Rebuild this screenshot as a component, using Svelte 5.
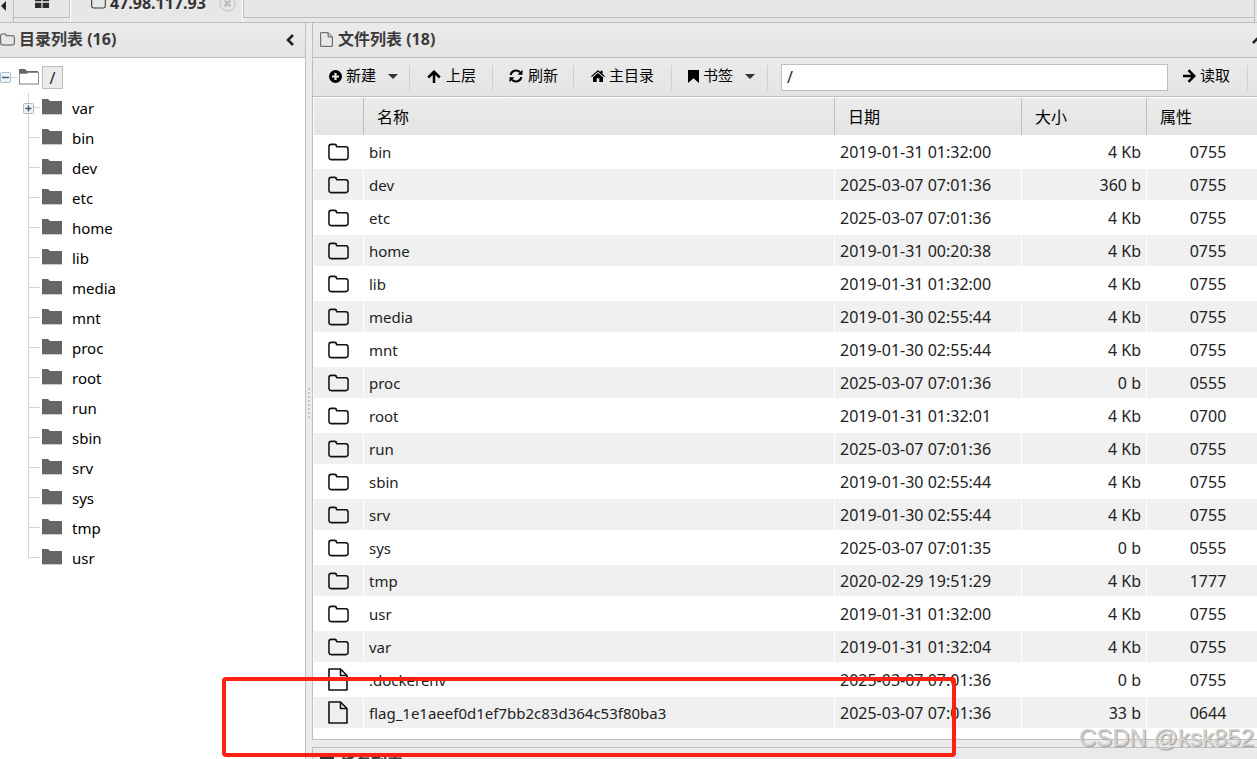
<script>
  const dirs = ['var', 'bin', 'dev', 'etc', 'home', 'lib', 'media', 'mnt', 'proc', 'root', 'run', 'sbin', 'srv', 'sys', 'tmp', 'usr'];
  const files = [
    ['bin', '2019-01-31 01:32:00', '4 Kb', '0755'],
    ['dev', '2025-03-07 07:01:36', '360 b', '0755'],
    ['etc', '2025-03-07 07:01:36', '4 Kb', '0755'],
    ['home', '2019-01-31 00:20:38', '4 Kb', '0755'],
    ['lib', '2019-01-31 01:32:00', '4 Kb', '0755'],
    ['media', '2019-01-30 02:55:44', '4 Kb', '0755'],
    ['mnt', '2019-01-30 02:55:44', '4 Kb', '0755'],
    ['proc', '2025-03-07 07:01:36', '0 b', '0555'],
    ['root', '2019-01-31 01:32:01', '4 Kb', '0700'],
    ['run', '2025-03-07 07:01:36', '4 Kb', '0755'],
    ['sbin', '2019-01-30 02:55:44', '4 Kb', '0755'],
    ['srv', '2019-01-30 02:55:44', '4 Kb', '0755'],
    ['sys', '2025-03-07 07:01:35', '0 b', '0555'],
    ['tmp', '2020-02-29 19:51:29', '4 Kb', '1777'],
    ['usr', '2019-01-31 01:32:00', '4 Kb', '0755'],
    ['var', '2019-01-31 01:32:04', '4 Kb', '0755'],
    ['.dockerenv', '2025-03-07 07:01:36', '0 b', '0755'],
    ['flag_1e1aeef0d1ef7bb2c83d364c53f80ba3', '2025-03-07 07:01:36', '33 b', '0644']
  ].map(([name, date, size, mode], i) => ({ name, date, size, mode, isFile: i > 15 }));
  let path = $state('/');
</script>

{#snippet folderLine(w, h, sw)}
  <svg width={w} height={h} viewBox="0 0 22 18" fill="none" stroke="currentColor" stroke-width={sw} stroke-linejoin="round">
    <path d="M1 3.4Q1 1 3.400 1H7Q9 1 9 3.600H18.600Q21 3.600 21 6V14.600Q21 17 18.600 17H3.400Q1 17 1 14.600Z" />
  </svg>
{/snippet}
{#snippet fileLine(w, h, sw)}
  <svg width={w} height={h} viewBox="0 0 20 23" fill="none" stroke="currentColor" stroke-width={sw} stroke-linejoin="round">
    <path d="M1 1H12.500L19 7.500V22H1ZM12.500 1V7.500H19" />
  </svg>
{/snippet}
{#snippet caret()}
  <svg class="caret" width="10" height="5" viewBox="0 0 10 5"><path d="M0 0H10L5 5Z" fill="#333" /></svg>
{/snippet}

<div class="app">
  <div class="tabs">
    <button class="scroll" aria-label="◂"><svg width="5" height="10" viewBox="0 0 5 10"><path d="M5 0V10L0 5Z" fill="#222" /></svg></button>
    <button class="tab home" aria-label="⊞">
      <svg width="14" height="12" viewBox="0 0 14 12" fill="#2c2c2c"><path d="M0 0H6.400V5.300H0ZM7.600 0H14V5.300H7.600ZM0 6.700H6.400V12H0ZM7.600 6.700H14V12H7.600Z" /></svg>
    </button>
    <button class="tab active">
      {@render folderLine(15, 13, 1.5)}
      <span>47.98.117.93</span>
      <svg class="close" width="17" height="17" viewBox="0 0 17 17" fill="none" stroke="#c0c0c0"><circle cx="8.500" cy="8.500" r="7.500" /><path d="M5.500 5.500L11.500 11.500M11.500 5.500L5.500 11.500" stroke-width="2.500" /></svg>
    </button>
    <div class="filler"></div>
    <div class="edge"></div>
  </div>

  <div class="main">
    <aside class="side">
      <header class="bar">
        {@render folderLine(15, 13, 1.5)}
        <h2>目录列表 (16)</h2>
        <button class="fold" aria-label="‹"><svg width="8" height="12" viewBox="0 0 8 12" fill="none" stroke="#222" stroke-width="2.6"><path d="M7 1L2 6L7 11" /></svg></button>
      </header>
      <div class="tree">
        <div class="root">
          <svg class="pm" width="11" height="11" viewBox="0 0 11 11"><rect x="0.500" y="0.500" width="10" height="10" rx="1" fill="#edf3f7" stroke="#a9bcc9" /><path d="M2 5.500H9" stroke="#3f5b6e" stroke-width="1.400" /></svg>
          <i class="dash"></i>
          <svg class="open" width="20" height="16" viewBox="0 0 20 16"><path d="M0 0H6L8 2H19V5H0Z" fill="#666" /><path d="M.5 15V4.500H8L9 3.500H19.500V15Z" fill="#fff" stroke="#8b8b8b" /><path d="M0 15.500H20" stroke="#bbb" /></svg>
          <button class="slash">/</button>
        </div>
        <ul>
          {#each dirs as d, i}
            <li>
              <span class="join" class:last={i === dirs.length - 1}>
                {#if i === 0}
                  <svg width="11" height="11" viewBox="0 0 11 11"><rect x="0.500" y="0.500" width="10" height="10" rx="1" fill="#edf3f7" stroke="#a9bcc9" /><path d="M2.500 5.500H8.500M5.500 2.500V8.500" stroke="#3f5b6e" stroke-width="1.400" /></svg>
                {/if}
              </span>
              <svg class="dir" width="20" height="16" viewBox="0 0 20 16"><path d="M0 0H6L8 2H20V15H0Z" fill="#666" /><path d="M0 15.500H20" stroke="#ccc" /></svg>
              <span class="label">{d}</span>
            </li>
          {/each}
        </ul>
      </div>
    </aside>
    <div class="split"><i></i></div>

    <div class="right">
      <section class="panel files">
        <header class="bar">
          {@render fileLine(13, 15, 1.5)}
          <h2>文件列表 (18)</h2>
          <button class="fold up" aria-label="^"><svg width="12" height="8" viewBox="0 0 12 8" fill="none" stroke="#222" stroke-width="2.6"><path d="M1 7L6 2L11 7" /></svg></button>
        </header>
        <div class="tools">
          <button class="new">
            <svg width="13" height="13" viewBox="0 0 13 13"><circle cx="6.500" cy="6.500" r="6.500" /><path d="M6.500 3V10M3 6.500H10" stroke="#e8e8e8" stroke-width="2.2" /></svg>
            <span>新建</span>{@render caret()}
          </button>
          <i class="sep"></i>
          <button class="upper">
            <svg width="14" height="13" viewBox="0 0 14 13" fill="none" stroke="#000" stroke-width="2.5"><path d="M7 13V2M1.200 7.500L7 1.800L12.800 7.500" /></svg>
            <span>上层</span>
          </button>
          <i class="sep"></i>
          <button class="refresh">
            <svg width="14" height="14" viewBox="0 0 14 14"><path d="M1.600 6A5.500 5.500 0 0 1 11 3.300M12.400 8A5.500 5.500 0 0 1 3 10.700" fill="none" stroke="#000" stroke-width="2.100" /><path d="M13.500 .8V5.700H8.600ZM.5 13.200V8.300H5.400Z" /></svg>
            <span>刷新</span>
          </button>
          <i class="sep"></i>
          <button class="homedir">
            <svg width="14" height="12" viewBox="0 0 14 12"><path d="M7 0L9.500 2.200V.8H11.600V4.100L14 6.200L13.200 7.100L7 1.700L.8 7.100L0 6.200Z" /><path d="M7 2.900L12 7.200V12H8.300V8.300H5.700V12H2V7.200Z" /></svg>
            <span>主目录</span>
          </button>
          <i class="sep"></i>
          <button class="mark">
            <svg width="11" height="13" viewBox="0 0 11 13"><path d="M0 0H11V13L5.500 8.300L0 13Z" /></svg>
            <span>书签</span>{@render caret()}
          </button>
          <i class="sep"></i>
          <input aria-label="/" bind:value={path} />
          <button class="read">
            <svg width="13" height="14" viewBox="0 0 13 14" fill="none" stroke="#000" stroke-width="2.500"><path d="M0 7H11M5.500 1.200L11.200 7L5.500 12.800" /></svg>
            <span>读取</span>
          </button>
          <i class="sep"></i>
        </div>
        <table>
          <colgroup><col class="c0" /><col /><col class="c2" /><col class="c3" /><col class="c4" /></colgroup>
          <thead>
            <tr><th></th><th>名称</th><th>日期</th><th>大小</th><th>属性</th></tr>
          </thead>
          <tbody>
            {#each files as f}
              <tr>
                <td class="ic">{#if f.isFile}{@render fileLine(20, 23, 1.6)}{:else}{@render folderLine(21, 18, 1.6)}{/if}</td>
                <td class="name">{f.name}</td>
                <td>{f.date}</td>
                <td class="size">{f.size}</td>
                <td class="mode">{f.mode}</td>
              </tr>
            {/each}
          </tbody>
        </table>
      </section>
      <section class="panel tasks">
        <header class="bar">
          <svg width="14" height="14" viewBox="0 0 14 14" stroke="#333" stroke-width="2"><path d="M0 1H14M0 5H14M0 9H14M0 13H14" /></svg>
          <h2>任务列表</h2>
        </header>
      </section>
    </div>
  </div>

  <div class="highlight"></div>
  <div class="watermark">CSDN @ksk852</div>
</div>

<style>
  :global(body) { margin: 0; }
  .app {
    position: relative;
    display: flex;
    flex-direction: column;
    height: 100vh;
    overflow: hidden;
    background: #ebebeb;
    color: #222;
    font: 16px/20px "Noto Sans", "Noto Sans CJK SC", sans-serif;
  }
  button { display: flex; align-items: center; padding: 0; border: 0; background: none; color: #000; font: inherit; white-space: nowrap; }
  svg { flex: none; display: block; }
  h2 { margin: 0; font-size: 16px; line-height: 20px; font-weight: 700; color: #3b3b3b; white-space: nowrap; }

  .tabs { flex: none; display: flex; height: 22px; overflow: hidden; border-bottom: 1px solid #bebebe; background: #e7e7e7; }
  .scroll { width: 14px; border-right: 1px solid #bebebe; align-items: flex-start; }
  .scroll svg { margin: 1px; }
  .tab { box-sizing: border-box; height: 18px; }
  .home { width: 56px; justify-content: center; align-items: flex-start; border: solid #bebebe; border-width: 0 1px 1px 0; }
  .home svg { margin-top: -4px; }
  .active { width: 173px; height: 22px; padding-left: 20px; gap: 4px; align-items: flex-start; color: #333; font-weight: 700; border: solid #fff; border-width: 0 1px; }
  .active svg:first-child { margin-top: -4px; }
  .active span { margin-top: -7px; width: 105px; text-align: left; }
  .close { margin-top: -5px; }
  .filler { flex: 1; height: 17px; border: solid #bebebe; border-width: 0 0 1px 1px; }
  .edge { width: 2px; border-left: 1px solid #bebebe; }

  .main { flex: 1; display: flex; min-height: 0; }
  .side { flex: none; width: 305px; display: flex; flex-direction: column; border-right: 1px solid #bebebe; background: #fff; }
  .bar { flex: none; display: flex; align-items: center; height: 32px; padding-bottom: 2px; border-bottom: 1px solid #bebebe; background: linear-gradient(#ebebeb, #e4e4e4); color: #555; }
  .side .bar { gap: 4px; }
  .fold { margin: 2px 11px 0 auto; }

  .tree { padding: 4px 0; }
  .root { display: flex; align-items: center; height: 31px; }
  .dash { width: 6px; margin-right: 2px; border-top: 1px solid #d4d4d4; }
  .slash { justify-content: center; width: 21px; height: 23px; box-sizing: border-box; margin-left: 3px; border: 1px solid #bebebe; background: #ebebeb; color: #222; }
  ul { list-style: none; margin: 0; padding: 0 0 0 23px; }
  li { display: flex; align-items: center; height: 30px; color: #000; }
  .join { position: relative; width: 17px; height: 30px; display: flex; align-items: center; margin-right: 2px; }
  .join::before { content: ""; position: absolute; left: 5px; top: 0; bottom: 0; border-left: 1px solid #d4d4d4; }
  .join.last::before { bottom: 15px; }
  .join::after { content: ""; position: absolute; left: 5px; right: 0; top: 14px; border-top: 1px solid #d4d4d4; }
  .join svg { position: relative; z-index: 1; }
  .dir { margin: 0 10px 2px 0; }
  .open { margin-bottom: 2px; }
  .label, .name { font-size: 15px; }

  .split { flex: none; width: 6px; display: flex; align-items: center; justify-content: center; background: #ebebeb; padding-top: 24px; }
  .split i { height: 30px; border-left: 2px dotted #c9c9c9; }

  .right { flex: 1; min-width: 0; display: flex; flex-direction: column; gap: 7px; margin-right: -12px; }
  .panel { border: 1px solid #bebebe; border-top: 0; }
  .files { flex: none; background: #fff; padding-bottom: 10px; }
  .panel.tasks { flex: 1; min-height: 0; overflow: hidden; border-top: 1px solid #bebebe; border-bottom: 0; }
  .panel .bar { padding-left: 7px; gap: 5px; }
  .bar .up { margin-right: 4px; }

  .tools { display: flex; align-items: center; height: 38px; border-bottom: 1px solid #bebebe; background: linear-gradient(#ebebeb, #e4e4e4); font-size: 15px; }
  .tools button { box-sizing: border-box; gap: 4px; height: 26px; margin-bottom: 2px; }
  .tools span { padding-bottom: 2px; }
  .sep { flex: none; height: 25px; border-left: 1px solid #c3d3db; }
  .caret { margin-left: 8px; }
  .new { width: 96px; padding-left: 16px; }
  .upper { width: 82px; padding-left: 17px; }
  .tools .upper, .tools .refresh { gap: 5px; }
  .refresh { width: 80px; padding-left: 16px; }
  .homedir { width: 97px; padding-left: 17px; }
  .mark { width: 95px; padding-left: 16px; }
  .tools input { flex: 1; min-width: 0; box-sizing: border-box; height: 27px; margin-left: 13px; padding: 0 5px; border: 1px solid #bebebe; background: #fff; color: #222; font: inherit; font-size: 16px; outline: 0; }
  .read { width: 79px; padding-left: 15px; }
  .tools > .sep:last-child { margin-right: 20px; }

  table { width: 100%; table-layout: fixed; border-collapse: separate; border-spacing: 0; padding: 1px 0 0 1px; }
  .c0 { width: 50px; }
  .c2 { width: 187px; }
  .c3 { width: 125px; }
  .c4 { width: 121px; }
  th { box-sizing: border-box; height: 37px; padding: 1px 12px 0 13px; text-align: left; font-weight: 400; color: #000; border-right: 1px solid #bebebe; background: linear-gradient(#ebebeb, #e4e4e4); }
  td { box-sizing: border-box; height: 33px; padding: 0 5px; border: solid #fff; border-width: 1px 1px 1px 0; background-clip: padding-box; white-space: nowrap; }
  tbody tr:nth-child(even) td { background-color: #f0f0f0; }
  td.ic { padding: 0 0 0 14px; color: #111; }
  td.size { text-align: right; }
  td.mode { text-align: center; padding: 0 4px 0 6px; }

  .highlight { position: absolute; left: 222px; top: 677px; width: 726px; height: 72px; border: 4px solid #ff2013; border-radius: 4px; }
  .watermark { position: absolute; right: 3px; bottom: 7px; font: 24px/28px "Liberation Sans", sans-serif; color: #d2d2d2; text-shadow: 1px 1px 1px #999; }
</style>
